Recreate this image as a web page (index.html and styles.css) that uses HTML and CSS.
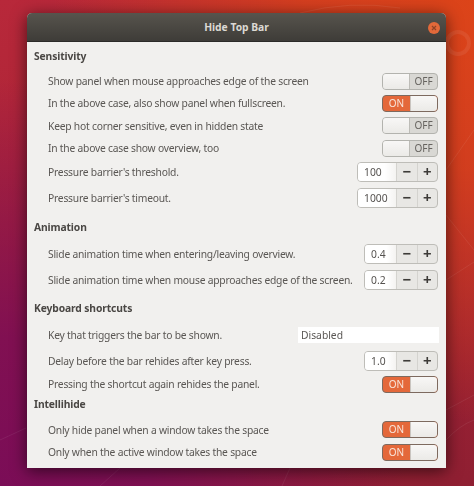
FILE: index.html
```html
<!DOCTYPE html>
<html lang="en">
<head>
<meta charset="utf-8">
<title>Hide Top Bar</title>
<link rel="stylesheet" href="styles.css">
</head>
<body>
<svg class="wallpaper" width="474" height="486" viewBox="0 0 474 486" aria-hidden="true">
  <g fill="none" stroke="#fff" stroke-opacity=".07">
    <circle cx="458" cy="43" r="11" stroke-width="4"/>
    <path d="M446 170 L474 130 M446 215 L474 250 M446 280 L474 262"/>
    <path d="M446 440 Q460 425 474 420 M446 410 L474 395 M290 468 L282 486 M120 468 L100 486"/>
    <path d="M300 13 Q350 0 400 8 M0 440 L26 428"/>
  </g>
</svg>
<main class="window">
  <header class="titlebar">
    <h1 class="title">Hide Top Bar</h1>
    <span class="close"><svg width="12" height="12" viewBox="0 0 12 12"><circle cx="6" cy="6" r="6" fill="#e2693a"/><path d="M4 4l4 4M8 4l-4 4" stroke="#8f4326" stroke-width="1.2"/></svg></span>
  </header>
  <div class="content">
    <h2 class="head head-first">Sensitivity</h2>
    <div class="row"><span>Show panel when mouse approaches edge of the screen</span><span class="switch"><span class="knob"></span><span class="state">OFF</span></span></div>
    <div class="row"><span>In the above case, also show panel when fullscreen.</span><span class="switch on"><span class="state">ON</span><span class="knob"></span></span></div>
    <div class="row"><span>Keep hot corner sensitive, even in hidden state</span><span class="switch"><span class="knob"></span><span class="state">OFF</span></span></div>
    <div class="row"><span>In the above case show overview, too</span><span class="switch"><span class="knob"></span><span class="state">OFF</span></span></div>
    <div class="row row-spin"><span>Pressure barrier's threshold.</span><span class="spin wide"><span class="value">100</span><span class="btn">−</span><span class="btn">+</span></span></div>
    <div class="row row-spin"><span>Pressure barrier's timeout.</span><span class="spin wide"><span class="value">1000</span><span class="btn">−</span><span class="btn">+</span></span></div>
    <h2 class="head head-anim">Animation</h2>
    <div class="row row-spin"><span>Slide animation time when entering/leaving overview.</span><span class="spin"><span class="value">0.4</span><span class="btn">−</span><span class="btn">+</span></span></div>
    <div class="row row-spin"><span>Slide animation time when mouse approaches edge of the screen.</span><span class="spin"><span class="value">0.2</span><span class="btn">−</span><span class="btn">+</span></span></div>
    <h2 class="head head-keys">Keyboard shortcuts</h2>
    <div class="row row-spin"><span>Key that triggers the bar to be shown.</span><span class="entry">Disabled</span></div>
    <div class="row row-spin"><span>Delay before the bar rehides after key press.</span><span class="spin"><span class="value">1.0</span><span class="btn">−</span><span class="btn">+</span></span></div>
    <div class="row"><span>Pressing the shortcut again rehides the panel.</span><span class="switch on"><span class="state">ON</span><span class="knob"></span></span></div>
    <h2 class="head head-intel">Intellihide</h2>
    <div class="row"><span>Only hide panel when a window takes the space</span><span class="switch on"><span class="state">ON</span><span class="knob"></span></span></div>
    <div class="row"><span>Only when the active window takes the space</span><span class="switch on"><span class="state">ON</span><span class="knob"></span></span></div>
  </div>
</main>
</body>
</html>
```

FILE: styles.css
```css
* { box-sizing: border-box; }

html, body { height: 100%; }

body {
  margin: 0;
  padding: 13px 0 0 27px;
  overflow: hidden;
  font-family: "Noto Sans", "Open Sans", sans-serif;
  font-size: 10.3px;
  letter-spacing: -0.23px;
  color: #5a5754;
  background:
    radial-gradient(circle at 0% 100%, #7b0d57 0%, rgba(123, 13, 87, .85) 22%, rgba(123, 13, 87, 0) 60%),
    radial-gradient(circle at 100% 0%, #dc4419 0%, rgba(220, 68, 25, .8) 25%, rgba(220, 68, 25, 0) 62%),
    linear-gradient(165deg, #b8283a 0%, #a42234 55%, #8f1f32 100%);
}

.wallpaper {
  position: absolute;
  top: 0;
  left: 0;
}

.window {
  position: relative;
  width: 419px;
  height: 455px;
  display: flex;
  flex-direction: column;
  border-radius: 5px 5px 0 0;
  background: #f1f0ee;
  box-shadow: 0 3px 16px rgba(0, 0, 0, .6);
  overflow: hidden;
  filter: blur(.3px);
}

.titlebar {
  flex: none;
  height: 29px;
  display: flex;
  align-items: center;
  justify-content: center;
  position: relative;
  background: linear-gradient(180deg, #57544d 0%, #3e3c38 100%);
  border-bottom: 1px solid #2c2b28;
}

.title {
  margin: 0;
  font-size: 10.3px;
  font-weight: 700;
  letter-spacing: 0;
  color: #dcd9d3;
}

.close {
  position: absolute;
  right: 6px;
  top: 9px;
  display: flex;
}

.content {
  padding: 0 8px 0 21px;
}

.head {
  margin: 0 0 0 -14px;
  font-size: 10.3px;
  font-weight: 700;
  line-height: 16px;
  letter-spacing: -0.12px;
  color: #4a4744;
}

.head-first { padding-top: 6px; height: 28px; }
.head-anim { padding-top: 9px; height: 31px; }
.head-keys { padding-top: 8px; height: 30px; }
.head-intel { padding-top: 0; height: 23px; }

.row {
  height: 22.33px;
  display: flex;
  align-items: center;
  justify-content: space-between;
}

.row-spin { height: 25.5px; }

.switch {
  width: 56px;
  height: 17px;
  display: flex;
  border: 1px solid #b3b3ae;
  border-radius: 4px;
  background: #d9d8d4;
  overflow: hidden;
}

.knob {
  width: 27px;
  background: linear-gradient(180deg, #f8f7f6, #ebeae7);
  border-right: 1px solid #bdbcb7;
}

.state {
  flex: 1;
  text-align: center;
  font-size: 10px;
  letter-spacing: 0;
  line-height: 15px;
  color: #66635f;
}

.switch.on {
  border-color: #7d6a5f;
  background: #e4683a;
}

.switch.on .state { color: #f8e4da; }

.switch.on .knob {
  border-right: 0;
  border-left: 1px solid #c9c4bf;
}

.spin {
  width: 74px;
  height: 20px;
  display: flex;
  border: 1px solid #bebdb8;
  border-radius: 4px;
  background: #e8e7e4;
  overflow: hidden;
}

.spin.wide { width: 81px; }

.value {
  flex: 1;
  padding-left: 6px;
  line-height: 18px;
  letter-spacing: 0;
  background: linear-gradient(90deg, #ffffff 70%, #f4f3f1);
  color: #55524f;
}

.btn {
  flex: none;
  width: 20.5px;
  text-align: center;
  font-size: 15px;
  line-height: 16px;
  font-weight: 700;
  color: #3d3b38;
  border-left: 1px solid #d4d3cf;
}

.entry {
  width: 141px;
  height: 16px;
  margin-right: -1px;
  padding-left: 3px;
  line-height: 16px;
  letter-spacing: 0;
  background: #fff;
}
```
